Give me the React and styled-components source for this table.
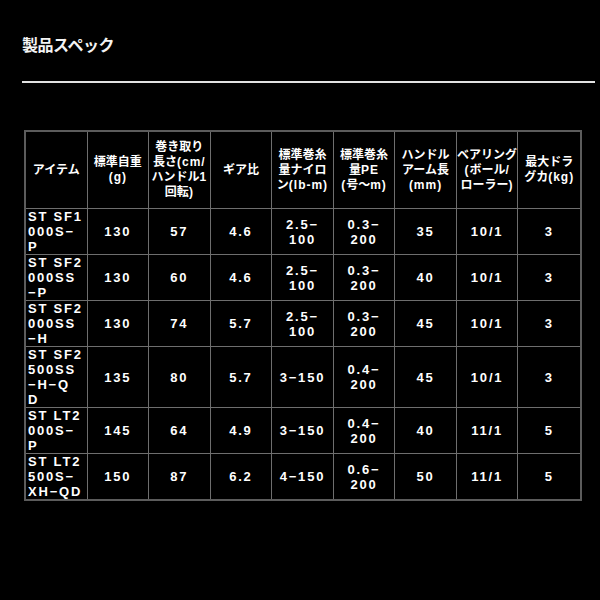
import React from "react";
import styled, { createGlobalStyle } from "styled-components";

const Global = createGlobalStyle`
  html, body { margin: 0; padding: 0; background: #000; }
  body { font-family: "Liberation Sans", "Noto Sans CJK JP", sans-serif; color: #fff; }
`;

const Page = styled.div`
  width: 600px;
  height: 600px;
  box-sizing: border-box;
  padding: 36px 0 0 0;
  background: #000;
`;

const Title = styled.h2`
  margin: 0 0 0 22px;
  font-family: "Noto Sans CJK JP", sans-serif;
  font-size: 16px;
  line-height: 16px;
  font-weight: 700;
  letter-spacing: -0.5px;
  color: #f4f4f4;
`;

const Rule = styled.hr`
  margin: 29px 0 0 22px;
  width: 573px;
  height: 2px;
  border: 0;
  background: #e2e2e2;
`;

const Table = styled.table`
  margin: 47px 0 0 24px;
  width: 558px;
  table-layout: fixed;
  border-collapse: separate;
  border-spacing: 0;
  border: 2px solid #5c5c5c;
`;

const Head = styled.th`
  padding: 8px 0;
  font-family: "Liberation Sans", "Noto Sans CJK JP", sans-serif;
  font-size: 12px;
  line-height: 15px;
  font-weight: 700;
  letter-spacing: 0;
  text-align: center;
  vertical-align: middle;
  white-space: nowrap;
  color: #fff;
  border-right: 1px solid #6e6e6e;
  border-bottom: 1px solid #6e6e6e;
  &:last-child { border-right: 0; }
`;

const Latin = styled.span`
  letter-spacing: 1px;
`;

const Cell = styled.td`
  padding: 0 0 0 ${(p) => (p.$left ? "2px" : "0")};
  font-family: "Liberation Sans", "Noto Sans CJK JP", sans-serif;
  font-size: 13px;
  line-height: 15px;
  font-weight: 700;
  letter-spacing: 1.8px;
  text-align: ${(p) => (p.$left ? "left" : "center")};
  vertical-align: middle;
  white-space: nowrap;
  color: #fff;
  border-right: 1px solid #6e6e6e;
  border-bottom: 1px solid #6e6e6e;
  &:last-child { border-right: 0; }
  tr:last-child > & { border-bottom: 0; }
`;

const Lines = ({ lines }) =>
  lines.map((l, i) => (
    <React.Fragment key={i}>
      {i > 0 && <br />}
      {l}
    </React.Fragment>
  ));

const headers = [
  ["アイテム"],
  ["標準自重", <Latin>(g)</Latin>],
  ["巻き取り", <>長さ<Latin>(cm/</Latin></>, <>ハンドル<Latin>1</Latin></>, <>回転<Latin>)</Latin></>],
  ["ギア比"],
  ["標準巻糸", "量ナイロ", <>ン<Latin>(lb-m)</Latin></>],
  ["標準巻糸", <>量<Latin>PE</Latin></>, <><Latin>(</Latin>号～<Latin>m)</Latin></>],
  ["ハンドル", "アーム長", <Latin>(mm)</Latin>],
  ["ベアリング", <><Latin>(</Latin>ボール<Latin>/</Latin></>, <>ローラー<Latin>)</Latin></>],
  ["最大ドラ", <>グカ<Latin>(kg)</Latin></>],
];

const D = "−";

const rows = [
  [["ST SF1", `000S${D}`, "P"], "130", "57", "4.6", [`2.5${D}`, "100"], [`0.3${D}`, "200"], "35", "10/1", "3"],
  [["ST SF2", "000SS", `${D}P`], "130", "60", "4.6", [`2.5${D}`, "100"], [`0.3${D}`, "200"], "40", "10/1", "3"],
  [["ST SF2", "000SS", `${D}H`], "130", "74", "5.7", [`2.5${D}`, "100"], [`0.3${D}`, "200"], "45", "10/1", "3"],
  [["ST SF2", "500SS", `${D}H${D}Q`, "D"], "135", "80", "5.7", [`3${D}150`], [`0.4${D}`, "200"], "45", "10/1", "3"],
  [["ST LT2", `000S${D}`, "P"], "145", "64", "4.9", [`3${D}150`], [`0.4${D}`, "200"], "40", "11/1", "5"],
  [["ST LT2", `500S${D}`, `XH${D}QD`], "150", "87", "6.2", [`4${D}150`], [`0.6${D}`, "200"], "50", "11/1", "5"],
];

export default function App() {
  return (
    <>
      <Global />
      <Page>
        <Title>製品スペック</Title>
        <Rule />
        <Table>
          <thead>
            <tr>
              {headers.map((h, i) => (
                <Head key={i}>
                  <Lines lines={h} />
                </Head>
              ))}
            </tr>
          </thead>
          <tbody>
            {rows.map((r, ri) => (
              <tr key={ri}>
                {r.map((c, ci) => (
                  <Cell key={ci} $left={ci === 0}>
                    <Lines lines={Array.isArray(c) ? c : [c]} />
                  </Cell>
                ))}
              </tr>
            ))}
          </tbody>
        </Table>
      </Page>
    </>
  );
}
